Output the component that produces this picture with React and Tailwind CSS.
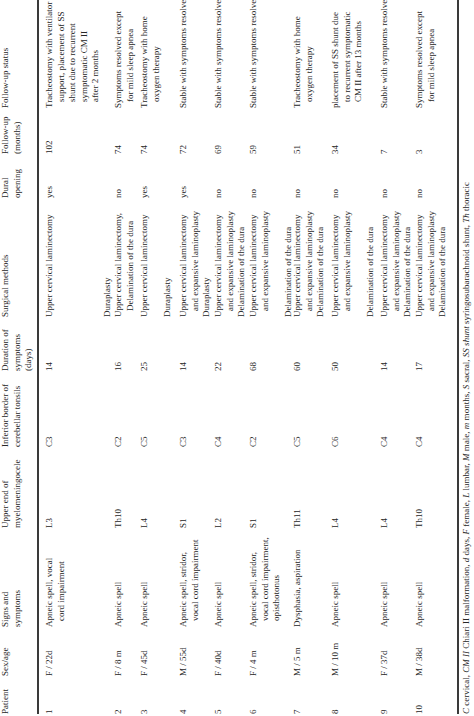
import React from "react";

// column widths of the (unrotated) table, left to right
const cols = "grid grid-cols-[38px_49px_99px_81px_76px_54px_119px_44px_46px_110px]";

const header = [
  ["Patient"],
  ["Sex/age"],
  ["Signs and", "symptoms"],
  ["Upper end of", "myelomeningocele"],
  ["Inferior border of", "cerebellar tonsils"],
  ["Duration of", "symptoms", "(days)"],
  ["Surgical methods"],
  ["Dural", "opening"],
  ["Follow-up", "(months)"],
  ["Follow-up status"],
];

// ">" = continuation line (hanging indent), "" = empty line
const rows = [
  {
    h: "h-[69px]",
    cells: [
      ["1"], ["F / 22d"], ["Apneic spell, vocal", ">cord impairment"], ["L3"], ["C3"], ["14"],
      ["Upper cervical laminectomy", "", "", "", "", "Duraplasty"],
      ["yes"], ["102"],
      ["Tracheostomy with ventilator", ">support, placement of SS", ">shunt due to recurrent", ">symptomatic CM II", ">after 2 months"],
    ],
  },
  {
    h: "h-[26px]",
    cells: [
      ["2"], ["F / 8 m"], ["Apneic spell"], ["Th10"], ["C2"], ["16"],
      ["Upper cervical laminectomy,", ">Delamination of the dura"],
      ["no"], ["74"], ["Symptoms resolved except", ">for mild sleep apnea"],
    ],
  },
  {
    h: "h-[39px]",
    cells: [
      ["3"], ["F / 45d"], ["Apneic spell"], ["L4"], ["C5"], ["25"],
      ["Upper cervical laminectomy", "", "Duraplasty"],
      ["yes"], ["74"], ["Tracheostomy with home", ">oxygen therapy"],
    ],
  },
  {
    h: "h-[35px]",
    cells: [
      ["4"], ["M / 55d"], ["Apneic spell, stridor,", ">vocal cord impairment"], ["S1"], ["C3"], ["14"],
      ["Upper cervical laminectomy", ">and expansive laminoplasty", "Duraplasty"],
      ["yes"], ["72"], ["Stable with symptoms resolved"],
    ],
  },
  {
    h: "h-[35px]",
    cells: [
      ["5"], ["F / 40d"], ["Apneic spell"], ["L2"], ["C4"], ["22"],
      ["Upper cervical laminectomy", ">and expansive laminoplasty", "Delamination of the dura"],
      ["no"], ["69"], ["Stable with symptoms resolved"],
    ],
  },
  {
    h: "h-[44px]",
    cells: [
      ["6"], ["F / 4 m"], ["Apneic spell, stridor,", ">vocal cord impairment,", ">opisthotonus"], ["S1"], ["C2"], ["68"],
      ["Upper cervical laminectomy", ">and expansive laminoplasty", "", "Delamination of the dura"],
      ["no"], ["59"], ["Stable with symptoms resolved"],
    ],
  },
  {
    h: "h-[38px]",
    cells: [
      ["7"], ["M / 5 m"], ["Dysphasia, aspiration"], ["Th11"], ["C5"], ["60"],
      ["Upper cervical laminectomy", ">and expansive laminoplasty", "Delamination of the dura"],
      ["no"], ["51"], ["Tracheostomy with home", ">oxygen therapy"],
    ],
  },
  {
    h: "h-[49px]",
    cells: [
      ["8"], ["M / 10 m"], ["Apneic spell"], ["L4"], ["C6"], ["50"],
      ["Upper cervical laminectomy", ">and expansive laminoplasty", "", "Delamination of the dura"],
      ["no"], ["34"], ["placement of SS shunt due", ">to recurrent symptomatic", ">CM II after 13 months"],
    ],
  },
  {
    h: "h-[35px]",
    cells: [
      ["9"], ["F / 37d"], ["Apneic spell"], ["L4"], ["C4"], ["14"],
      ["Upper cervical laminectomy", ">and expansive laminoplasty", "Delamination of the dura"],
      ["no"], ["7"], ["Stable with symptoms resolved"],
    ],
  },
  {
    h: "h-[43px]",
    cells: [
      ["10"], ["M / 38d"], ["Apneic spell"], ["Th10"], ["C4"], ["17"],
      ["Upper cervical laminectomy", ">and expansive laminoplasty", "Delamination of the dura"],
      ["no"], ["3"], ["Symptoms resolved except", ">for mild sleep apnea"],
    ],
  },
];

function Cell({ lines }) {
  return (
    <div className="flex flex-col whitespace-nowrap">
      {lines.map((l, i) =>
        l === "" ? (
          <div key={i} className="h-[11.5px]" />
        ) : l.startsWith(">") ? (
          <div key={i} className="pl-[6px]">{l.slice(1)}</div>
        ) : (
          <div key={i}>{l}</div>
        )
      )}
    </div>
  );
}

export default function App() {
  return (
    <div className="w-[474px] h-[716px] overflow-hidden bg-white">
      {/* table is laid out upright and turned a quarter to the left */}
      <div className="w-[716px] h-[474px] origin-top-left -rotate-90 translate-y-[716px]
                      font-['Liberation_Serif',serif] text-[9px] leading-[11.5px] text-[#262626]">

        {/* head */}
        <div className={`${cols} h-[37px] -mt-[2px]`}>
          {header.map((h, i) => (
            <Cell key={i} lines={h} />
          ))}
        </div>
        <div className="h-[1.5px] bg-[#3a3a3a]" />

        {/* body */}
        <div className="pt-[5.75px]">
          {rows.map((r, i) => (
            <div key={i} className={`${cols} ${r.h}`}>
              {r.cells.map((c, j) => (
                <Cell key={j} lines={c} />
              ))}
            </div>
          ))}
        </div>
        <div className="h-[1.5px] bg-[#3a3a3a]" />

        {/* footnote */}
        <p className="mt-[2.5px] whitespace-nowrap">
          <i>C</i> cervical, <i>CM II</i> Chiari II malformation, <i>d</i> days, <i>F</i> female,{" "}
          <i>L</i> lumbar, <i>M</i> male, <i>m</i> months, <i>S</i> sacral, <i>SS shunt</i>{" "}
          syringosubarachnoid shunt, <i>Th</i> thoracic
        </p>
      </div>
    </div>
  );
}
